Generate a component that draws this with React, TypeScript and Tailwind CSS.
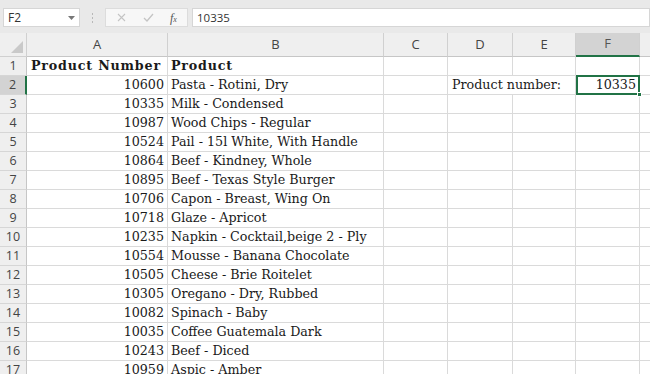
type Row = {
  num: string;
  product: string;
  bold?: boolean;
};

const rows: Row[] = [
  { num: "Product Number", product: "Product", bold: true },
  { num: "10600", product: "Pasta - Rotini, Dry" },
  { num: "10335", product: "Milk - Condensed" },
  { num: "10987", product: "Wood Chips - Regular" },
  { num: "10524", product: "Pail - 15l White, With Handle" },
  { num: "10864", product: "Beef - Kindney, Whole" },
  { num: "10895", product: "Beef - Texas Style Burger" },
  { num: "10706", product: "Capon - Breast, Wing On" },
  { num: "10718", product: "Glaze - Apricot" },
  { num: "10235", product: "Napkin - Cocktail,beige 2 - Ply" },
  { num: "10554", product: "Mousse - Banana Chocolate" },
  { num: "10505", product: "Cheese - Brie Roitelet" },
  { num: "10305", product: "Oregano - Dry, Rubbed" },
  { num: "10082", product: "Spinach - Baby" },
  { num: "10035", product: "Coffee Guatemala Dark" },
  { num: "10243", product: "Beef - Diced" },
  { num: "10959", product: "Aspic - Amber" },
];

const cols = [
  { name: "A", w: "w-[141px]" },
  { name: "B", w: "w-[216px]" },
  { name: "C", w: "w-[64px]" },
  { name: "D", w: "w-[65px]" },
  { name: "E", w: "w-[63px]" },
  { name: "F", w: "w-[64px]" },
  { name: "", w: "w-[64px]" },
];

const serif = "font-['DejaVu_Serif',serif] text-[12.7px] text-[#1a1a1a]";
const ui = "font-['Open_Sans',sans-serif]";

function Toolbar() {
  return (
    <div className="flex h-[33px] items-start bg-[#e9e9e9] pt-[8px]">
      <div className="ml-[3px] flex h-[19px] w-[77px] items-center justify-between border border-[#d6d6d6] bg-white pl-[4px] pr-[4px]">
        <span className={`${ui} text-[12px] text-[#333]`}>F2</span>
        <svg width="7" height="4" viewBox="0 0 7 4">
          <path d="M0 0h7L3.5 4z" fill="#777" />
        </svg>
      </div>
      <div className="flex h-[19px] w-[25px] items-center justify-center">
        <div className="flex flex-col gap-[2px]">
          <div className="h-[2px] w-[1px] bg-[#b8b8b8]" />
          <div className="h-[2px] w-[1px] bg-[#b8b8b8]" />
          <div className="h-[2px] w-[1px] bg-[#b8b8b8]" />
        </div>
      </div>
      <div className="flex h-[19px] w-[83px] items-center border border-[#dcdcdc] bg-[#f7f7f7] pl-[11px]">
        <svg width="9" height="9" viewBox="0 0 9 9" className="mr-[17px]">
          <path d="M1 1l7 7M8 1L1 8" stroke="#c4c4c4" strokeWidth="1.1" />
        </svg>
        <svg width="11" height="9" viewBox="0 0 11 9" className="mr-[16px]">
          <path d="M1 5l3 3 6-7" stroke="#c4c4c4" strokeWidth="1.3" fill="none" />
        </svg>
        <span className="font-['Liberation_Serif',serif] text-[12px] italic text-[#555]">
          f<span className="text-[8px]">x</span>
        </span>
      </div>
      <div className="ml-[4px] flex h-[19px] flex-1 items-center border border-[#d6d6d6] bg-white pl-[4px]">
        <span className={`${ui} text-[11.5px] text-[#333]`}>10335</span>
      </div>
    </div>
  );
}

function HeaderRow() {
  return (
    <div className="flex h-[24px] bg-[#efefef]">
      <div className="relative w-[27px] shrink-0 border-b border-r border-[#d0d0d0]">
        <svg width="12" height="12" viewBox="0 0 12 12" className="absolute bottom-[3px] right-[3px]">
          <path d="M12 0V12H0z" fill="#c9c9c9" />
        </svg>
      </div>
      {cols.map((c, i) => {
        const sel = c.name === "F";
        return (
          <div
            key={i}
            className={`${c.w} shrink-0 flex items-center justify-center border-r border-[#d0d0d0] ${
              sel ? "border-b-2 border-b-[#217346] bg-[#d3d3d3]" : "border-b border-b-[#c6c6c6]"
            }`}
          >
            <span className={`${ui} text-[13px] ${sel ? "text-[#555]" : "text-[#444]"}`}>{c.name}</span>
          </div>
        );
      })}
    </div>
  );
}

function GridRow({ row, index }: { row: Row; index: number }) {
  const n = index + 1;
  const sel = n === 2;
  const text = `${serif} ${row.bold ? "font-bold tracking-[0.8px]" : ""} whitespace-nowrap leading-none`;
  return (
    <div className="flex h-[19px]">
      <div
        className={`w-[27px] shrink-0 flex items-center justify-center border-b border-[#d6d6d6] ${
          sel ? "border-r-2 border-r-[#217346] bg-[#d3d3d3]" : "border-r border-r-[#c6c6c6] bg-[#efefef]"
        }`}
      >
        <span className={`${ui} text-[12.5px] text-[#444]`}>{n}</span>
      </div>
      <div
        className={`w-[141px] shrink-0 flex items-end border-b border-r border-[#dadada] pb-[2px] pr-[3px] ${
          row.bold ? "justify-start pl-[4px]" : "justify-end"
        }`}
      >
        <span className={text}>{row.num}</span>
      </div>
      <div className="w-[216px] shrink-0 flex items-end border-b border-r border-[#dadada] pb-[2px] pl-[3px]">
        <span className={text}>{row.product}</span>
      </div>
      <div className="w-[64px] shrink-0 border-b border-r border-[#dadada]" />
      {sel ? (
        <div className="w-[128px] shrink-0 flex items-end border-b border-r border-[#dadada] pb-[2px] pl-[4px]">
          <span className={text}>Product number:</span>
        </div>
      ) : (
        <>
          <div className="w-[65px] shrink-0 border-b border-r border-[#dadada]" />
          <div className="w-[63px] shrink-0 border-b border-r border-[#dadada]" />
        </>
      )}
      {sel ? (
        <div className="relative w-[64px] shrink-0 flex items-end justify-end border-2 border-[#217346] -mt-[1px] h-[20px] pb-[1px] pr-[2px]">
          <span className={text}>10335</span>
          <div className="absolute -bottom-[4px] -right-[4px] h-[5px] w-[5px] border border-white bg-[#217346]" />
        </div>
      ) : (
        <div className="w-[64px] shrink-0 border-b border-r border-[#dadada]" />
      )}
      <div className="w-[64px] shrink-0 border-b border-r border-[#dadada]" />
    </div>
  );
}

export default function App() {
  return (
    <div className="h-[374px] w-[650px] overflow-hidden bg-white">
      <Toolbar />
      <HeaderRow />
      {rows.map((row, i) => (
        <GridRow key={i} row={row} index={i} />
      ))}
    </div>
  );
}
